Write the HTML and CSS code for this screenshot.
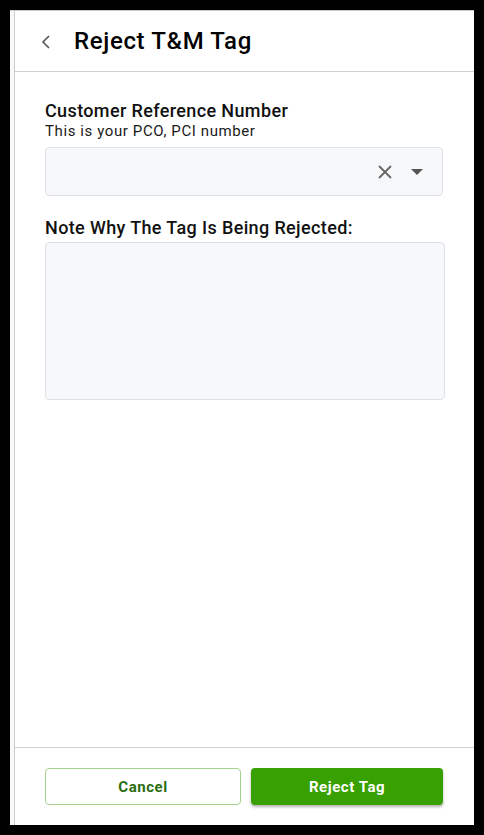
FILE: index.html
```html
<!DOCTYPE html>
<html lang="en">
<head>
<meta charset="utf-8">
<title>Reject T&amp;M Tag</title>
<link rel="stylesheet" href="styles.css">
</head>
<body>
<div class="frame">
  <div class="panel">
    <header class="header">
      <button class="back" aria-label="Back">
        <svg width="10" height="14" viewBox="0 0 10 14"><path d="M8 1 L2 7 L8 13" fill="none" stroke="#555" stroke-width="1.6"/></svg>
      </button>
      <h1 class="title">Reject T&amp;M Tag</h1>
    </header>
    <main class="content">
      <div class="field">
        <div class="label">Customer Reference Number</div>
        <div class="hint">This is your PCO, PCI number</div>
        <div class="select">
          <span class="select-value"></span>
          <svg class="clear" width="16" height="16" viewBox="0 0 16 16"><path d="M2 2 L14 14 M14 2 L2 14" stroke="#666" stroke-width="1.8" fill="none"/></svg>
          <svg class="caret" width="12" height="6" viewBox="0 0 12 6"><path d="M0 0 L12 0 L6 6 Z" fill="#555"/></svg>
        </div>
      </div>
      <div class="field note-field">
        <div class="label">Note Why The Tag Is Being Rejected:</div>
        <textarea class="note"></textarea>
      </div>
    </main>
    <footer class="footer">
      <button class="btn btn-cancel">Cancel</button>
      <button class="btn btn-reject">Reject Tag</button>
    </footer>
  </div>
</div>
</body>
</html>
```

FILE: styles.css
```css
* { box-sizing: border-box; }
html, body { margin: 0; padding: 0; }
body {
  background: #000;
  width: 484px;
  height: 835px;
  font-family: Roboto, "Liberation Sans", Arial, sans-serif;
  color: #111;
}
.frame {
  margin: 10px 0 0 10px;
  width: 464px;
  height: 815px;
  background: #f9f9f9;
  border-top: 1px solid #c9c9c9;
  padding-left: 4px;
}
.panel {
  height: 100%;
  background: #fff;
  border-left: 1px solid #c8cacc;
  display: flex;
  flex-direction: column;
}
.header {
  height: 61px;
  border-bottom: 1px solid #cfcfcf;
  display: flex;
  align-items: center;
  padding-left: 26px;
}
.back {
  background: none;
  border: 0;
  padding: 0;
  width: 10px;
  height: 14px;
  display: flex;
  margin-right: 23px;
  margin-top: 2px;
}
.title {
  margin: 0;
  font-size: 24px;
  line-height: 28px;
  font-weight: 500;
  letter-spacing: 0.65px;
  color: #000;
}
.content {
  flex: 1;
  padding: 28px 29px 0 30px;
}
.label {
  font-size: 18px;
  line-height: 21px;
  font-weight: 500;
  letter-spacing: 0.37px;
  color: #111;
}
.hint {
  font-size: 15px;
  line-height: 18px;
  letter-spacing: 0.6px;
  color: #1a1a1a;
  margin-top: 1px;
}
.select {
  margin-top: 7px;
  margin-right: 2px;
  height: 49px;
  background: #f7f8fa;
  border: 1px solid #dde2e8;
  border-radius: 4px;
  display: flex;
  align-items: center;
  padding-right: 19px;
}
.select-value { flex: 1; }
.clear { margin-right: 18px; margin-top: 1px; }
.caret { margin-top: 0; }
.note-field { margin-top: 21px; }
.note {
  display: block;
  margin-top: 4px;
  width: 100%;
  height: 158px;
  background: #f7f8fa;
  border: 1px solid #dde2e8;
  border-radius: 4px;
  resize: none;
  font-family: inherit;
}
.footer {
  border-top: 1px solid #cfcfcf;
  padding: 20px 0 20px 30px;
  display: grid;
  grid-template-columns: 196px 192px;
  column-gap: 10px;
}
.btn {
  height: 37px;
  border-radius: 4px;
  font-family: inherit;
  font-size: 15px;
  font-weight: 700;
  letter-spacing: 0.55px;
  padding: 0;
}
.btn-cancel {
  background: #fff;
  border: 1px solid #a3d18e;
  color: #2b6d10;
}
.btn-reject {
  background: #38a000;
  border: 0;
  color: #fff;
  box-shadow: 0 2px 3px rgba(0, 0, 0, 0.3);
}
```
